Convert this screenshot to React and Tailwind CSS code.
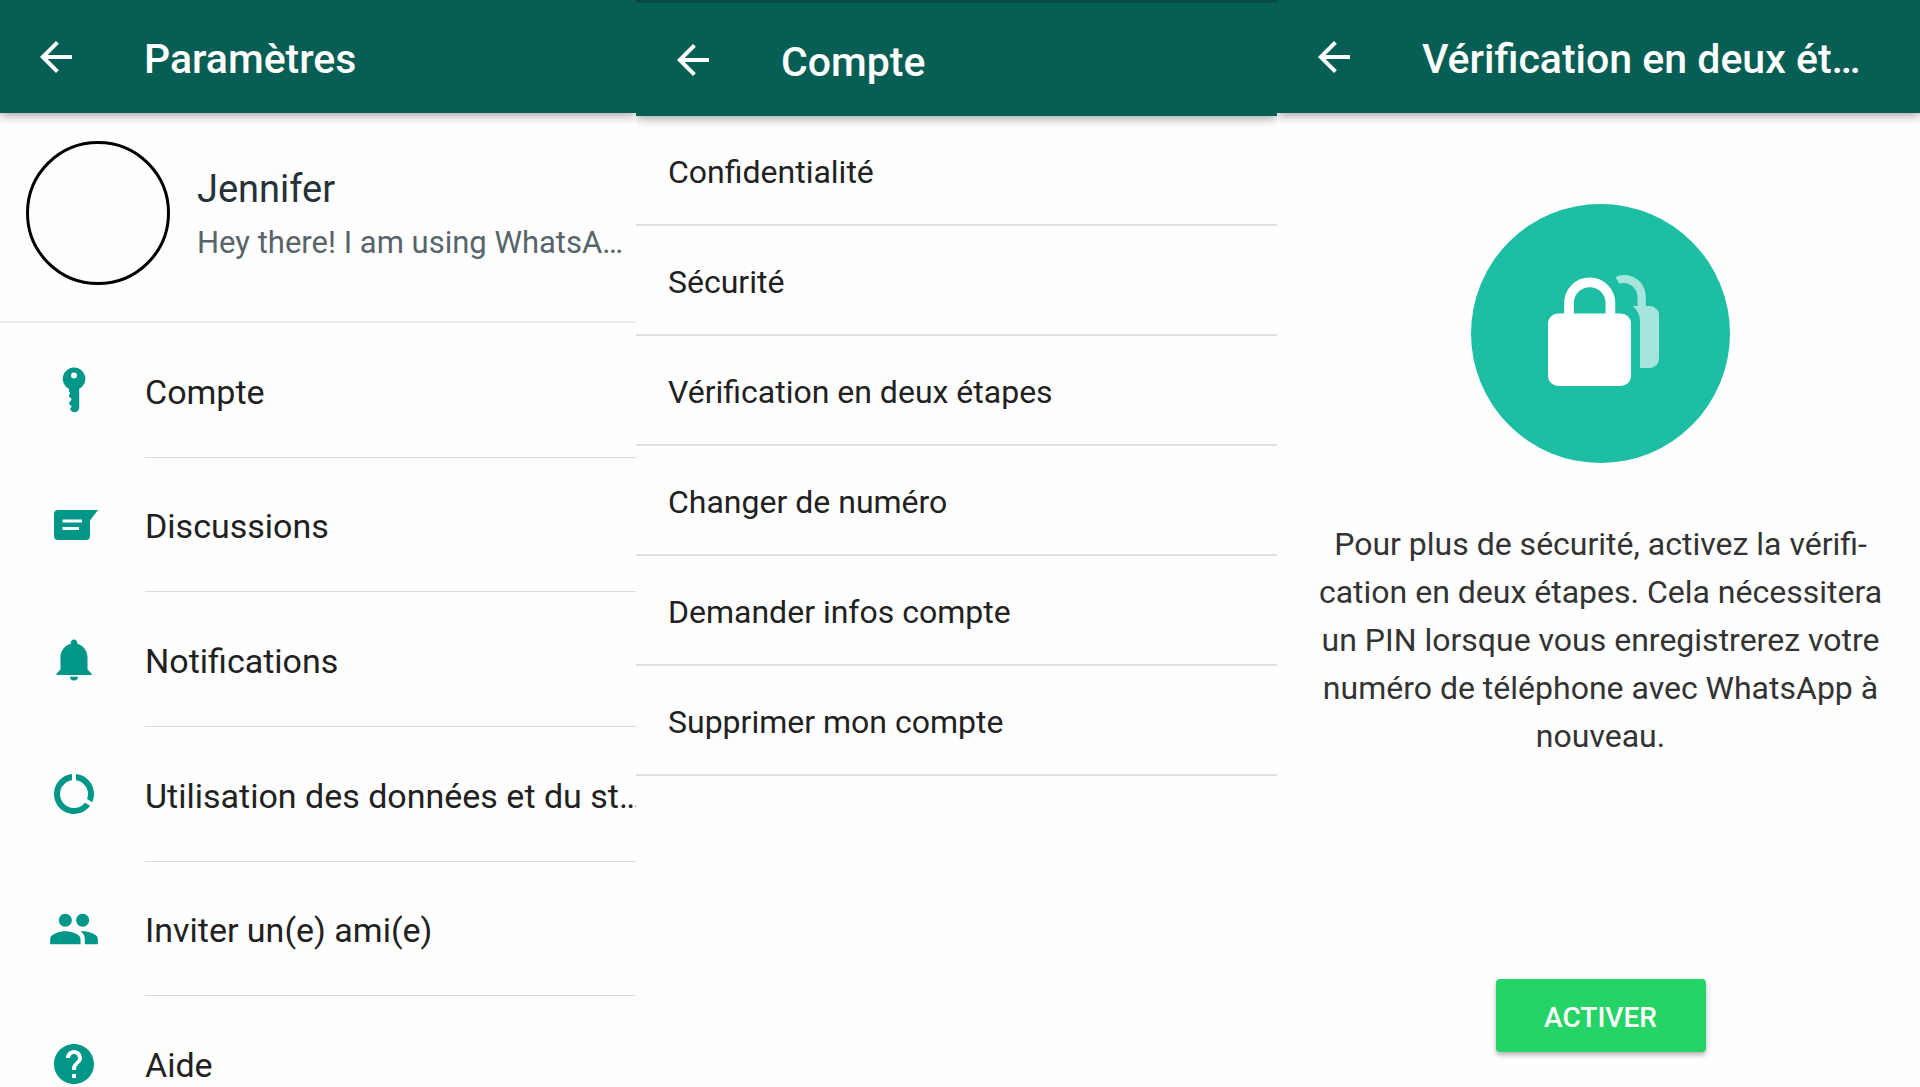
import { MdArrowBack, MdDataUsage, MdHelp, MdPeople } from "react-icons/md";

function KeyIcon() {
  return (
    <svg width="24" height="46" viewBox="0 0 24 46" fill="currentColor">
      <path
        fillRule="evenodd"
        d="M12 .5a11.2 11.2 0 0 1 5.2 21.2V40.500c0 2.600-2.200 4.700-4.700 4.700-1.600 0-2.900-.7-3.800-1.900l-.6-1.600 1.300-1.600v-1.300l-2-1.200-.3-1.800 2.300-2.900v-1.400l-2.200-1.600-.2-1.700 1.100-2.100-1.200-1.800v-2.600A11.200 11.200 0 0 1 12 .5Zm0 4.900a3 3 0 1 0 0 6 3 3 0 0 0 0-6Z"
      />
    </svg>
  );
}

function ChatIcon() {
  return (
    <svg width="48" height="30" viewBox="-4 0 48 30">
      <path
        fill="currentColor"
        d="M4 0h40l-8 10.500V26a4 4 0 0 1-4 4H4a4 4 0 0 1-4-4V4a4 4 0 0 1 4-4Z"
      />
      <path fill="#fefefe" d="M8.500 9.500h19.500v3H8.500zM8.500 17h16.500v3H8.500z" />
    </svg>
  );
}

function BellIcon() {
  return (
    <svg width="36" height="42" viewBox="0 0 36 42" fill="currentColor">
      <path d="M18 .5c1.800 0 3.200 1.400 3.200 3.200v1C27 6.200 31.500 11.500 31.500 18v12.500l4 4V36H.5v-1.500l4-4V18c0-6.500 4.500-11.800 10.300-13.300v-1C14.800 1.900 16.200.5 18 .5Z" />
      <path d="M14 37.800h8a4 3.700 0 0 1-8 0Z" />
    </svg>
  );
}

function LocksIcon() {
  return (
    <svg width="259" height="259" viewBox="0 0 259 259">
      <circle cx="129.500" cy="129.500" r="129.500" fill="#1ebea5" />
      <path
        fill="#a6e5db"
        d="M144.500 73.300c2.500-1.500 5-2.300 8.500-2.300C165.500 71 174.800 80.500 174.800 93v9h4.200a9 9 0 0 1 9 9v44a9 9 0 0 1-9 9h-10v-46c0-7-2.500-12-7.300-16h4.900V93.500c0-8-6.100-14.500-14.100-14.500-1.500 0-2.700.2-4 .8Z"
      />
      <rect x="77" y="109.500" width="83" height="72.500" rx="10" fill="#fff" />
      <path
        d="M98 112V99a20.700 20.700 0 0 1 41.400 0v13"
        fill="none"
        stroke="#fff"
        strokeWidth="9.700"
      />
    </svg>
  );
}

const settings = [
  { label: "Compte", icon: <KeyIcon /> },
  { label: "Discussions", icon: <ChatIcon /> },
  { label: "Notifications", icon: <BellIcon /> },
  { label: "Utilisation des données et du st…", icon: <MdDataUsage size={48} /> },
  { label: "Inviter un(e) ami(e)", icon: <MdPeople size={52} /> },
  { label: "Aide", icon: <MdHelp size={48} /> },
];

const account = [
  "Confidentialité",
  "Sécurité",
  "Vérification en deux étapes",
  "Changer de numéro",
  "Demander infos compte",
  "Supprimer mon compte",
];

function Header({ title, className }) {
  return (
    <header
      className={`flex shrink-0 items-center gap-16 bg-[#075e54] text-white shadow-[0_2px_10px_rgba(0,0,0,0.4)] ${className}`}
    >
      <button type="button" aria-label="Retour" className="shrink-0 cursor-pointer">
        <MdArrowBack size={48} />
      </button>
      <h1 className="pt-1 text-[41px] leading-12 font-medium whitespace-nowrap">
        {title}
      </h1>
    </header>
  );
}

function App() {
  return (
    <main className="grid h-screen grid-cols-[636fr_641fr_643fr] overflow-hidden bg-[#fefefe] font-[Roboto,sans-serif] text-[#212121]">
      {/* Paramètres */}
      <section className="flex min-w-0 flex-col overflow-hidden">
        <Header title="Paramètres" className="h-[113px] pl-8" />
        <a
          href="#profil"
          className="flex h-[210px] shrink-0 items-center gap-[27px] border-b-2 border-[#ebebeb] pb-2 pl-[26px]"
        >
          <span className="size-36 shrink-0 rounded-full border-3 border-black"></span>
          <span className="min-w-0 pt-1 whitespace-nowrap">
            <span className="block text-[38px] leading-14 text-[#263238]">
              Jennifer
            </span>
            <span className="block text-[31px] leading-13 text-[#586469]">
              Hey there! I am using WhatsA…
            </span>
          </span>
        </a>
        <nav className="grid h-[808px] shrink-0 grid-rows-6">
          {settings.map((item) => (
            <a
              key={item.label}
              href="#reglage"
              className="flex items-stretch gap-[47px] pl-[50px]"
            >
              <span className="flex w-12 shrink-0 items-center justify-center text-[#009688]">
                <span className="shrink-0">{item.icon}</span>
              </span>
              <span className="flex min-w-0 flex-1 items-center border-b border-[#dcdcdc] pt-1 text-[34px] leading-12 whitespace-nowrap">
                {item.label}
              </span>
            </a>
          ))}
        </nav>
      </section>

      {/* Compte */}
      <section className="flex min-w-0 flex-col overflow-hidden">
        <Header
          title="Compte"
          className="h-[116px] border-t-3 border-[#064c44] pl-[33px]"
        />
        <nav>
          {account.map((label) => (
            <a
              key={label}
              href="#compte"
              className="flex h-[110px] items-center border-b-2 border-[#e0e0e0] pt-1 pl-8 text-[32px] leading-12 whitespace-nowrap"
            >
              {label}
            </a>
          ))}
        </nav>
      </section>

      {/* Vérification en deux étapes */}
      <section className="flex min-w-0 flex-col overflow-hidden">
        <Header title="Vérification en deux ét…" className="h-[113px] pl-[33px]" />
        <div className="flex flex-1 flex-col items-center pt-[91px] pr-8 pb-[35px] pl-9">
          <LocksIcon />
          <p className="mt-[57px] text-center text-[32px] leading-12 text-[#333]">
            Pour plus de sécurité, activez la vérifi&shy;cation en deux étapes.
            Cela nécessitera un PIN lorsque vous enregistrerez votre numéro de
            téléphone avec WhatsApp à nouveau.
          </p>
          <button
            type="button"
            className="mt-auto h-[73px] w-[210px] cursor-pointer rounded-sm bg-[#25d366] pt-1 text-[28px] font-medium text-white shadow-[0_3px_5px_rgba(0,0,0,0.3)]"
          >
            ACTIVER
          </button>
        </div>
      </section>
    </main>
  );
}

export default App;
